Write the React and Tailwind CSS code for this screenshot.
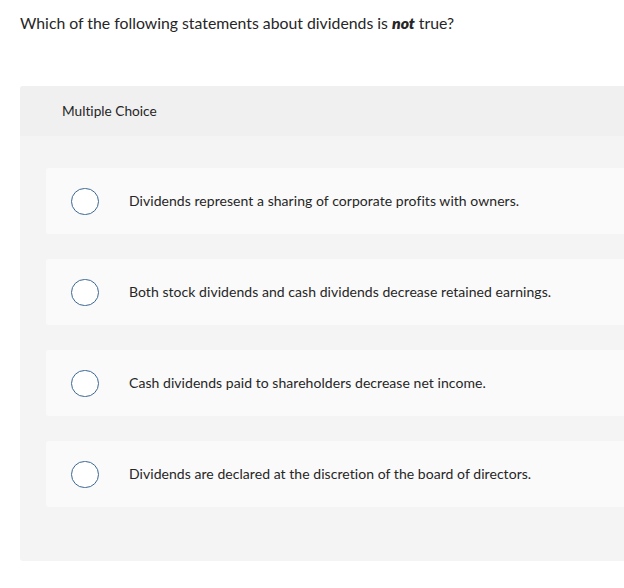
export default function App() {
  const options = [
    "Dividends represent a sharing of corporate profits with owners.",
    "Both stock dividends and cash dividends decrease retained earnings.",
    "Cash dividends paid to shareholders decrease net income.",
    "Dividends are declared at the discretion of the board of directors.",
  ];
  return (
    <div
      className="w-[624px] h-[588px] overflow-hidden bg-white text-[#262626] [font-variant-ligatures:none]"
      style={{ fontFamily: "Lato, 'Open Sans', sans-serif" }}
    >
      <div className="pl-[20px] pt-[13px] h-[86px] text-[15.8px] leading-[20px]">
        Which of the following statements about dividends is{" "}
        <b className="italic font-extrabold">not</b> true?
      </div>
      <div className="ml-[20px] w-[640px] h-[475px] rounded-[3px] bg-[#f4f4f4] overflow-hidden">
        <div className="h-[50px] bg-[#f0f0f0] flex items-center pl-[42px] text-[13.7px]">
          Multiple Choice
        </div>
        <div className="pt-[32px] pl-[26px] flex flex-col gap-[25px]">
          {options.map((o) => (
            <div
              key={o}
              className="h-[66px] bg-[#fafafa] rounded-[3px] flex items-center"
            >
              <div className="ml-[25px] w-[28px] h-[27px] rounded-full border-[1.5px] border-[#3b6796] bg-white shrink-0" />
              <div className="ml-[30px] text-[14px] leading-[18px] tracking-[0.05px]">{o}</div>
            </div>
          ))}
        </div>
      </div>
    </div>
  );
}
